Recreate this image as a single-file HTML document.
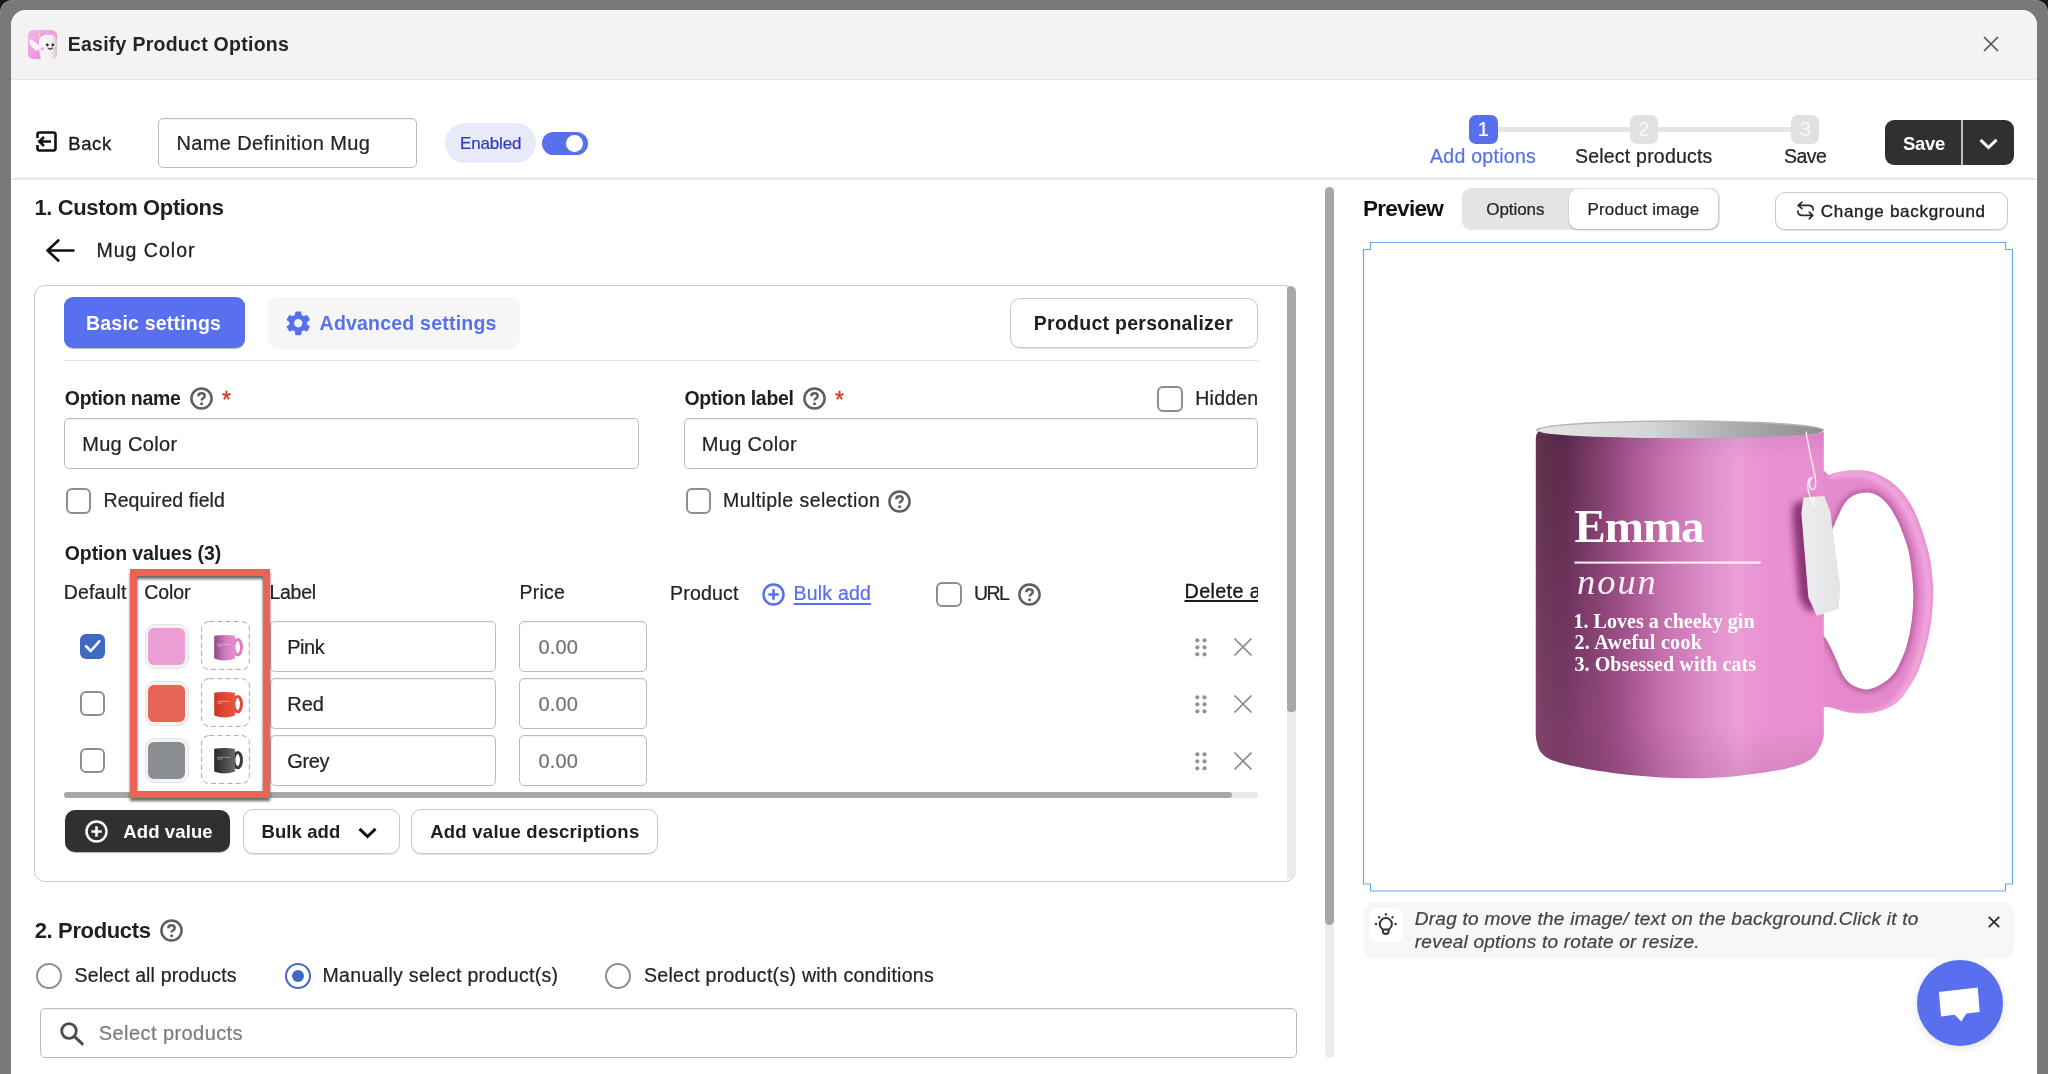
<!DOCTYPE html>
<html lang="en">
<head>
<meta charset="utf-8">
<title>Easify Product Options</title>
<style>
*{box-sizing:border-box;margin:0;padding:0}
html,body{width:2048px;height:1074px;overflow:hidden;background:#797979;font-family:"Liberation Sans",sans-serif;color:#303030}
.a{position:absolute}
.t{position:absolute;white-space:nowrap;line-height:1}
.inp{position:absolute;border:1.400px solid #b9bdc2;border-radius:5px;background:#fff;box-shadow:inset 0 1px 0 rgba(0,0,0,.05)}
.cb{position:absolute;width:25.500px;height:25.500px;border:2.500px solid #8a8f94;border-radius:6px;background:#fff}
.btn{position:absolute;border:1px solid #c6c9cc;border-radius:9px;background:#fff;box-shadow:0 1px 0 rgba(0,0,0,.10)}
.rad{position:absolute;width:26px;height:26px;border:2.500px solid #8a8f94;border-radius:50%;background:#fff}
svg{position:absolute;overflow:visible}
</style>
</head>
<body>
<div class="a" style="left:0;top:0;width:2048px;height:1074px;overflow:hidden;will-change:transform">
<!-- window corner -->
<div class="a" style="left:0;top:0;width:14px;height:14px;background:#161616"></div>
<div class="a" style="left:0;top:0;width:14px;height:14px;border-radius:12px 0 0 0;background:#797979;box-shadow:inset 1px 1px 0 rgba(255,255,255,.08)"></div>
<div class="a" style="left:2034px;top:0;width:14px;height:14px;background:#161616"></div>
<div class="a" style="left:2034px;top:0;width:14px;height:14px;border-radius:0 12px 0 0;background:#797979;box-shadow:inset -1px 1px 0 rgba(255,255,255,.08)"></div>
<!-- modal -->
<div class="a" style="left:11px;top:10px;width:2025.500px;height:1100px;background:#fff;border-radius:15px 15px 0 0"></div>
<!-- HEADER -->
<div class="a" style="left:11px;top:10px;width:2025.500px;height:69.800px;background:#f3f3f3;border-bottom:1.600px solid #e5e5e5;border-radius:15px 15px 0 0"></div>

<svg style="left:28px;top:30px" width="29" height="29" viewBox="0 0 29 29">
<defs><linearGradient id="lg" x1="0" y1="0" x2="1" y2="1"><stop offset="0" stop-color="#f5b5e7"/><stop offset="1" stop-color="#ea83d8"/></linearGradient>
<linearGradient id="lb" x1="0" x2="1"><stop offset="0" stop-color="#fbf8fa"/><stop offset=".7" stop-color="#f1edf0"/><stop offset="1" stop-color="#cfc9ce"/></linearGradient>
<clipPath id="lc"><rect width="29" height="29" rx="5.500"/></clipPath></defs>
<g clip-path="url(#lc)"><rect width="29" height="29" fill="url(#lg)"/>
<path d="M1.500 12.500 C0.500 10 2.500 8.500 4.500 10 L10 14.500 L12.500 18.500 L8.500 21 C5 19 2.500 16 1.500 12.500 Z" fill="#f8f3f7"/>
<path d="M11 12 C11 6.500 14.500 4.800 20 4.800 C26 4.800 29 6.500 29 12 L29 29 L13 29 C11.500 25 11 17 11 12 Z" fill="url(#lb)"/>
<circle cx="19.300" cy="14.900" r="1.350" fill="#26222a"/><circle cx="24.800" cy="14.900" r="1.350" fill="#26222a"/>
<path d="M20 18 Q22 20.300 24.200 18" stroke="#26222a" stroke-width="1.100" fill="none" stroke-linecap="round"/>
<circle cx="14.200" cy="19" r="1.700" fill="#f6a9dc"/><circle cx="27.300" cy="18.600" r="1.300" fill="#f6a9dc"/>
<circle cx="11.200" cy="5.400" r="1.300" fill="#f3d77a"/><circle cx="14" cy="4.700" r="1.100" fill="#8ea6f3"/>
</g></svg>
<div class="t" style="left:67.70px;top:34.99px;font:700 19.50px/1 'Liberation Sans',sans-serif;color:#242424;letter-spacing:0.263px;">Easify Product Options</div>
<svg style="left:1983px;top:36px" width="16" height="16" viewBox="0 0 16 16"><path d="M1 1 L15 15 M15 1 L1 15" stroke="#555" stroke-width="1.700" fill="none"/></svg>
<div class="a" style="left:12px;top:178px;width:2024px;height:1px;background:#dcdcdc;box-shadow:0 1px 2px rgba(0,0,0,.10)"></div>
<svg style="left:36px;top:131px" width="22" height="22" viewBox="0 0 22 22"><path d="M1.500 7 V3.500 Q1.500 1.500 3.500 1.500 H17.500 Q19.500 1.500 19.500 3.500 V17.500 Q19.500 19.500 17.500 19.500 H3.500 Q1.500 19.500 1.500 17.500 V14" stroke="#111" stroke-width="2.600" fill="none"/><path d="M15 10.500 H3.500 M8 6 L3.300 10.500 L8 15" stroke="#111" stroke-width="2.600" fill="none" stroke-linejoin="miter"/></svg>
<div class="t" style="left:68.20px;top:135.04px;font:400 18.50px/1 'Liberation Sans',sans-serif;color:#1a1a1a;letter-spacing:0.641px;-webkit-text-stroke:0.35px #1a1a1a;">Back</div>
<div class="inp" style="left:158px;top:117.600px;width:258.500px;height:50.600px;border-radius:5px"></div>
<div class="t" style="left:176.50px;top:133.47px;font:400 20.00px/1 'Liberation Sans',sans-serif;color:#242424;letter-spacing:0.365px;-webkit-text-stroke:0.22px #242424;">Name Definition Mug</div>
<div class="a" style="left:445px;top:123px;width:91px;height:39.500px;border-radius:20px;background:#e8eafa"></div>
<div class="t" style="left:460.00px;top:135.01px;font:400 17.00px/1 'Liberation Sans',sans-serif;color:#2c3db8;letter-spacing:-0.156px;-webkit-text-stroke:0.20px #2c3db8;">Enabled</div>
<div class="a" style="left:541.500px;top:131.500px;width:46px;height:23px;border-radius:12px;background:#5870ee"></div>
<div class="a" style="left:566px;top:134.500px;width:17px;height:17px;border-radius:50%;background:#fff"></div>
<div class="a" style="left:1490px;top:127px;width:310px;height:5px;background:#e4e5e7"></div>
<div class="a" style="left:1469px;top:115px;width:28.500px;height:28.500px;border-radius:7px;background:#5870ee"></div>
<div class="a" style="left:1630px;top:115px;width:28px;height:28.500px;border-radius:7px;background:#e1e1e1"></div>
<div class="a" style="left:1791px;top:115px;width:28px;height:28.500px;border-radius:7px;background:#e1e1e1"></div>
<div class="t" style="left:1477.70px;top:119.27px;font:400 20.00px/1 'Liberation Sans',sans-serif;color:#fff;letter-spacing:0.000px;-webkit-text-stroke:0.22px #fff;">1</div>
<div class="t" style="left:1638.30px;top:119.27px;font:400 20.00px/1 'Liberation Sans',sans-serif;color:#f6f6f6;letter-spacing:0.000px;-webkit-text-stroke:0.22px #f6f6f6;">2</div>
<div class="t" style="left:1799.80px;top:119.27px;font:400 20.00px/1 'Liberation Sans',sans-serif;color:#f6f6f6;letter-spacing:0.000px;-webkit-text-stroke:0.22px #f6f6f6;">3</div>
<div class="t" style="left:1430.00px;top:147.19px;font:400 19.50px/1 'Liberation Sans',sans-serif;color:#5870ee;letter-spacing:0.276px;-webkit-text-stroke:0.22px #5870ee;">Add options</div>
<div class="t" style="left:1575.00px;top:147.19px;font:400 19.50px/1 'Liberation Sans',sans-serif;color:#242424;letter-spacing:0.210px;-webkit-text-stroke:0.22px #242424;">Select products</div>
<div class="t" style="left:1784.00px;top:147.19px;font:400 19.50px/1 'Liberation Sans',sans-serif;color:#242424;letter-spacing:-0.534px;-webkit-text-stroke:0.22px #242424;">Save</div>
<div class="a" style="left:1885px;top:120px;width:129px;height:45px;border-radius:9px;background:#303030"></div>
<div class="a" style="left:1961px;top:120px;width:2px;height:45px;background:#bdbdbd"></div>
<div class="t" style="left:1903.00px;top:135.04px;font:700 18.50px/1 'Liberation Sans',sans-serif;color:#fff;letter-spacing:-0.306px;">Save</div>
<svg style="left:1979px;top:138px" width="19" height="12" viewBox="0 0 19 12"><path d="M1.500 1.800 L9.500 9.500 L17.500 1.800" stroke="#fff" stroke-width="3" fill="none"/></svg>
<div class="t" style="left:34.40px;top:197.28px;font:700 22.00px/1 'Liberation Sans',sans-serif;color:#1f1f1f;letter-spacing:-0.377px;">1. Custom Options</div>
<svg style="left:45px;top:239px" width="30" height="24" viewBox="0 0 30 24"><path d="M28.500 11.500 H2.500 M13.300 1.500 L2.500 11.500 L13.300 21.500" stroke="#111" stroke-width="2.600" fill="none" stroke-linecap="round" stroke-linejoin="round"/></svg>
<div class="t" style="left:96.40px;top:241.29px;font:400 19.50px/1 'Liberation Sans',sans-serif;color:#1f1f1f;letter-spacing:1.018px;-webkit-text-stroke:0.30px #1f1f1f;">Mug Color</div>
<div class="a" style="left:34.200px;top:285px;width:1262.300px;height:596.500px;border:1px solid #c9c9c9;border-radius:11px;background:#fff"></div>
<div class="a" style="left:1286.500px;top:287px;width:9px;height:592px;background:#ebebeb;border-radius:0 9px 9px 0"></div>
<div class="a" style="left:1286.500px;top:286px;width:9px;height:426px;background:#a8a8a8;border-radius:5px 8px 5px 5px"></div>
<div class="a" style="left:64px;top:297px;width:180.500px;height:51px;border-radius:9px;background:#5870ee;box-shadow:0 1px 0 rgba(0,0,0,.25)"></div>
<div class="t" style="left:86.00px;top:314.09px;font:700 19.50px/1 'Liberation Sans',sans-serif;color:#fff;letter-spacing:0.202px;">Basic settings</div>
<div class="a" style="left:267.500px;top:297px;width:252px;height:52px;border-radius:11px;background:#f6f6f6"></div>
<svg style="left:284.200px;top:308.600px" width="28.500" height="28.500" viewBox="0 0 24 24"><path fill="#5870ee" fill-rule="evenodd" d="M19.430 12.980c.040-.320.070-.640.070-.980s-.030-.660-.070-.980l2.110-1.650c.190-.150.240-.420.120-.640l-2-3.460c-.120-.220-.390-.300-.610-.220l-2.490 1c-.520-.400-1.080-.730-1.690-.980l-.380-2.650A.488.488 0 0 0 14 2h-4c-.250 0-.460.180-.490.420l-.380 2.650c-.610.250-1.170.590-1.690.980l-2.490-1c-.230-.090-.490 0-.610.220l-2 3.460c-.130.220-.070.490.120.640l2.110 1.650c-.040.320-.070.650-.070.980s.030.660.070.980l-2.110 1.650c-.190.150-.240.420-.120.640l2 3.460c.120.220.390.300.610.220l2.490-1c.520.400 1.080.730 1.690.980l.380 2.650c.030.240.240.420.490.420h4c.250 0 .460-.180.490-.420l.380-2.650c.610-.250 1.170-.590 1.690-.980l2.490 1c.230.090.490 0 .610-.220l2-3.460c.120-.220.070-.490-.120-.640l-2.110-1.650zM12 15.500c-1.930 0-3.500-1.570-3.500-3.500s1.570-3.500 3.500-3.500 3.500 1.570 3.500 3.500-1.570 3.500-3.500 3.500z"/></svg>
<div class="t" style="left:319.60px;top:313.99px;font:700 19.50px/1 'Liberation Sans',sans-serif;color:#5870ee;letter-spacing:0.211px;">Advanced settings</div>
<div class="btn" style="left:1010px;top:297.500px;width:247.500px;height:50.500px;border-radius:10px"></div>
<div class="t" style="left:1033.80px;top:313.69px;font:700 19.50px/1 'Liberation Sans',sans-serif;color:#202020;letter-spacing:0.265px;">Product personalizer</div>
<div class="a" style="left:64px;top:360px;width:1193.500px;height:1px;background:#dfdfdf"></div>
<div class="t" style="left:64.80px;top:389.39px;font:700 19.50px/1 'Liberation Sans',sans-serif;color:#1f1f1f;letter-spacing:-0.313px;">Option name</div>
<svg style="left:189.7px;top:387.0px" width="23" height="23" viewBox="0 0 23 23"><circle cx="11.500" cy="11.500" r="10.100" stroke="#5c5f62" stroke-width="2.500" fill="none"/><path d="M8.300 9.300 Q8.300 6.300 11.500 6.300 Q14.700 6.300 14.700 9 Q14.700 10.700 12.800 11.600 Q11.600 12.200 11.600 13.600" stroke="#5c5f62" stroke-width="2.500" fill="none"/><circle cx="11.600" cy="16.800" r="1.550" fill="#5c5f62"/></svg>
<div class="t" style="left:221.90px;top:389.23px;font:400 23.00px/1 'Liberation Sans',sans-serif;color:#cf3a1f;letter-spacing:0.000px;-webkit-text-stroke:0.30px #cf3a1f;">*</div>
<div class="t" style="left:684.40px;top:389.39px;font:700 19.50px/1 'Liberation Sans',sans-serif;color:#1f1f1f;letter-spacing:-0.277px;">Option label</div>
<svg style="left:803.0px;top:387.0px" width="23" height="23" viewBox="0 0 23 23"><circle cx="11.500" cy="11.500" r="10.100" stroke="#5c5f62" stroke-width="2.500" fill="none"/><path d="M8.300 9.300 Q8.300 6.300 11.500 6.300 Q14.700 6.300 14.700 9 Q14.700 10.700 12.800 11.600 Q11.600 12.200 11.600 13.600" stroke="#5c5f62" stroke-width="2.500" fill="none"/><circle cx="11.600" cy="16.800" r="1.550" fill="#5c5f62"/></svg>
<div class="t" style="left:835.00px;top:389.23px;font:400 23.00px/1 'Liberation Sans',sans-serif;color:#cf3a1f;letter-spacing:0.000px;-webkit-text-stroke:0.30px #cf3a1f;">*</div>
<div class="cb" style="left:1157px;top:386px"></div>
<div class="t" style="left:1195.30px;top:389.29px;font:400 19.50px/1 'Liberation Sans',sans-serif;color:#242424;letter-spacing:0.210px;-webkit-text-stroke:0.22px #242424;">Hidden</div>
<div class="inp" style="left:64px;top:418.200px;width:574.500px;height:50.800px"></div>
<div class="t" style="left:82.20px;top:434.47px;font:400 20.00px/1 'Liberation Sans',sans-serif;color:#242424;letter-spacing:0.326px;-webkit-text-stroke:0.22px #242424;">Mug Color</div>
<div class="inp" style="left:684px;top:418.200px;width:573.500px;height:50.800px"></div>
<div class="t" style="left:701.70px;top:434.47px;font:400 20.00px/1 'Liberation Sans',sans-serif;color:#242424;letter-spacing:0.338px;-webkit-text-stroke:0.22px #242424;">Mug Color</div>
<div class="cb" style="left:65.500px;top:488px"></div>
<div class="t" style="left:103.50px;top:491.39px;font:400 19.50px/1 'Liberation Sans',sans-serif;color:#242424;letter-spacing:0.079px;-webkit-text-stroke:0.22px #242424;">Required field</div>
<div class="cb" style="left:685.500px;top:488px"></div>
<div class="t" style="left:723.00px;top:491.39px;font:400 19.50px/1 'Liberation Sans',sans-serif;color:#242424;letter-spacing:0.428px;-webkit-text-stroke:0.22px #242424;">Multiple selection</div>
<svg style="left:888.0px;top:490.0px" width="23" height="23" viewBox="0 0 23 23"><circle cx="11.500" cy="11.500" r="10.100" stroke="#5c5f62" stroke-width="2.500" fill="none"/><path d="M8.300 9.300 Q8.300 6.300 11.500 6.300 Q14.700 6.300 14.700 9 Q14.700 10.700 12.800 11.600 Q11.600 12.200 11.600 13.600" stroke="#5c5f62" stroke-width="2.500" fill="none"/><circle cx="11.600" cy="16.800" r="1.550" fill="#5c5f62"/></svg>
<div class="t" style="left:64.80px;top:543.69px;font:700 19.50px/1 'Liberation Sans',sans-serif;color:#1f1f1f;letter-spacing:-0.112px;">Option values (3)</div>
<div class="t" style="left:63.80px;top:583.09px;font:400 19.50px/1 'Liberation Sans',sans-serif;color:#242424;letter-spacing:0.139px;-webkit-text-stroke:0.22px #242424;">Default</div>
<div class="t" style="left:144.30px;top:583.09px;font:400 19.50px/1 'Liberation Sans',sans-serif;color:#242424;letter-spacing:-0.126px;-webkit-text-stroke:0.22px #242424;">Color</div>
<div class="t" style="left:269.50px;top:583.09px;font:400 19.50px/1 'Liberation Sans',sans-serif;color:#242424;letter-spacing:-0.295px;-webkit-text-stroke:0.22px #242424;">Label</div>
<div class="t" style="left:519.50px;top:583.09px;font:400 19.50px/1 'Liberation Sans',sans-serif;color:#242424;letter-spacing:0.229px;-webkit-text-stroke:0.22px #242424;">Price</div>
<div class="t" style="left:670.00px;top:584.09px;font:400 19.50px/1 'Liberation Sans',sans-serif;color:#242424;letter-spacing:0.203px;-webkit-text-stroke:0.22px #242424;">Product</div>
<svg style="left:762px;top:582.500px" width="23" height="23" viewBox="0 0 23 23"><circle cx="11.500" cy="11.500" r="10" stroke="#5870ee" stroke-width="2.500" fill="none"/><path d="M11.500 6.300 V16.700 M6.300 11.500 H16.700" stroke="#5870ee" stroke-width="2.600" fill="none"/></svg>
<div class="t" style="left:793.50px;top:584.49px;font:400 19.50px/1 'Liberation Sans',sans-serif;color:#5870ee;letter-spacing:0.208px;-webkit-text-stroke:0.22px #5870ee;text-decoration:underline;text-decoration-thickness:1.500px;text-underline-offset:2.500px;">Bulk add</div>
<div class="cb" style="left:936px;top:581.500px"></div>
<div class="t" style="left:974.00px;top:584.09px;font:400 19.50px/1 'Liberation Sans',sans-serif;color:#242424;letter-spacing:-1.632px;-webkit-text-stroke:0.22px #242424;">URL</div>
<svg style="left:1018.0px;top:582.5px" width="23" height="23" viewBox="0 0 23 23"><circle cx="11.500" cy="11.500" r="10.100" stroke="#5c5f62" stroke-width="2.500" fill="none"/><path d="M8.300 9.300 Q8.300 6.300 11.500 6.300 Q14.700 6.300 14.700 9 Q14.700 10.700 12.800 11.600 Q11.600 12.200 11.600 13.600" stroke="#5c5f62" stroke-width="2.500" fill="none"/><circle cx="11.600" cy="16.800" r="1.550" fill="#5c5f62"/></svg>
<div class="a" style="left:1180px;top:575px;width:78px;height:40px;overflow:hidden">
<div class="t" style="left:4.50px;top:6.84px;font:400 19.80px/1 'Liberation Sans',sans-serif;color:#1a1a1a;letter-spacing:0.000px;-webkit-text-stroke:0.35px #1a1a1a;text-decoration:underline;text-decoration-thickness:2px;text-underline-offset:2px;letter-spacing:0.350px;">Delete all</div>
</div>
<div class="a" style="left:79.500px;top:633.9px;width:25.500px;height:25.500px;border-radius:6px;background:#3f6ac4"></div>
<svg style="left:79.500px;top:633.9px" width="26" height="26" viewBox="0 0 26 26"><path d="M6 12.200 L10.700 17 L19.300 7.300" stroke="#fff" stroke-width="2.600" fill="none" stroke-linecap="round" stroke-linejoin="round"/></svg>
<div class="a" style="left:144.500px;top:624.4px;width:44px;height:44.500px;border-radius:10px;border:1px solid #e2e3e3;background:#f3f4f4"></div>
<div class="a" style="left:148px;top:628.4px;width:37px;height:37px;border-radius:6px;background:#ec9fd4"></div>
<svg style="left:201px;top:621.4px" width="49" height="49" viewBox="0 0 49 49"><rect x=".600" y=".600" width="47.800" height="47.800" rx="7.500" fill="#fff" stroke="#a6abb1" stroke-width="1" stroke-dasharray="5.200 3"/></svg>
<div class="inp" style="left:269.500px;top:621.4px;width:226.500px;height:50.500px"></div>
<div class="t" style="left:287.20px;top:637.17px;font:400 20.00px/1 'Liberation Sans',sans-serif;color:#242424;letter-spacing:-0.435px;-webkit-text-stroke:0.22px #242424;">Pink</div>
<div class="inp" style="left:519px;top:621.4px;width:128px;height:50.500px"></div>
<div class="t" style="left:538.40px;top:637.37px;font:400 20.00px/1 'Liberation Sans',sans-serif;color:#6f7377;letter-spacing:0.166px;-webkit-text-stroke:0.22px #6f7377;">0.00</div>
<svg style="left:1194.500px;top:637.7px" width="12" height="19" viewBox="0 0 12 19" fill="#8f9398"><circle cx="2.3" cy="2.3" r="2.100"/><circle cx="2.3" cy="9.3" r="2.100"/><circle cx="2.3" cy="16.3" r="2.100"/><circle cx="9.5" cy="2.3" r="2.100"/><circle cx="9.5" cy="9.3" r="2.100"/><circle cx="9.5" cy="16.3" r="2.100"/></svg>
<svg style="left:1234px;top:637.7px" width="18" height="18" viewBox="0 0 18 18"><path d="M0.500 0.500 L17.500 17.500 M17.500 0.500 L0.500 17.500" stroke="#85888c" stroke-width="1.700" fill="none"/></svg>
<div class="cb" style="left:79.500px;top:690.6px"></div>
<div class="a" style="left:144.500px;top:681.3px;width:44px;height:44.500px;border-radius:10px;border:1px solid #e2e3e3;background:#f3f4f4"></div>
<div class="a" style="left:148px;top:685.3px;width:37px;height:37px;border-radius:6px;background:#e66557"></div>
<svg style="left:201px;top:678.3px" width="49" height="49" viewBox="0 0 49 49"><rect x=".600" y=".600" width="47.800" height="47.800" rx="7.500" fill="#fff" stroke="#a6abb1" stroke-width="1" stroke-dasharray="5.200 3"/></svg>
<div class="inp" style="left:269.500px;top:678.3px;width:226.500px;height:50.500px"></div>
<div class="t" style="left:287.20px;top:694.07px;font:400 20.00px/1 'Liberation Sans',sans-serif;color:#242424;letter-spacing:0.000px;-webkit-text-stroke:0.22px #242424;">Red</div>
<div class="inp" style="left:519px;top:678.3px;width:128px;height:50.500px"></div>
<div class="t" style="left:538.40px;top:694.27px;font:400 20.00px/1 'Liberation Sans',sans-serif;color:#6f7377;letter-spacing:0.166px;-webkit-text-stroke:0.22px #6f7377;">0.00</div>
<svg style="left:1194.500px;top:694.6px" width="12" height="19" viewBox="0 0 12 19" fill="#8f9398"><circle cx="2.3" cy="2.3" r="2.100"/><circle cx="2.3" cy="9.3" r="2.100"/><circle cx="2.3" cy="16.3" r="2.100"/><circle cx="9.5" cy="2.3" r="2.100"/><circle cx="9.5" cy="9.3" r="2.100"/><circle cx="9.5" cy="16.3" r="2.100"/></svg>
<svg style="left:1234px;top:694.6px" width="18" height="18" viewBox="0 0 18 18"><path d="M0.500 0.500 L17.500 17.500 M17.500 0.500 L0.500 17.500" stroke="#85888c" stroke-width="1.700" fill="none"/></svg>
<div class="cb" style="left:79.500px;top:747.5px"></div>
<div class="a" style="left:144.500px;top:738.2px;width:44px;height:44.500px;border-radius:10px;border:1px solid #e2e3e3;background:#f3f4f4"></div>
<div class="a" style="left:148px;top:742.2px;width:37px;height:37px;border-radius:6px;background:#8a8d91"></div>
<svg style="left:201px;top:735.2px" width="49" height="49" viewBox="0 0 49 49"><rect x=".600" y=".600" width="47.800" height="47.800" rx="7.500" fill="#fff" stroke="#a6abb1" stroke-width="1" stroke-dasharray="5.200 3"/></svg>
<div class="inp" style="left:269.500px;top:735.2px;width:226.500px;height:50.500px"></div>
<div class="t" style="left:287.20px;top:750.97px;font:400 20.00px/1 'Liberation Sans',sans-serif;color:#242424;letter-spacing:-0.313px;-webkit-text-stroke:0.22px #242424;">Grey</div>
<div class="inp" style="left:519px;top:735.2px;width:128px;height:50.500px"></div>
<div class="t" style="left:538.40px;top:751.17px;font:400 20.00px/1 'Liberation Sans',sans-serif;color:#6f7377;letter-spacing:0.166px;-webkit-text-stroke:0.22px #6f7377;">0.00</div>
<svg style="left:1194.500px;top:751.5px" width="12" height="19" viewBox="0 0 12 19" fill="#8f9398"><circle cx="2.3" cy="2.3" r="2.100"/><circle cx="2.3" cy="9.3" r="2.100"/><circle cx="2.3" cy="16.3" r="2.100"/><circle cx="9.5" cy="2.3" r="2.100"/><circle cx="9.5" cy="9.3" r="2.100"/><circle cx="9.5" cy="16.3" r="2.100"/></svg>
<svg style="left:1234px;top:751.5px" width="18" height="18" viewBox="0 0 18 18"><path d="M0.500 0.500 L17.500 17.500 M17.500 0.500 L0.500 17.500" stroke="#85888c" stroke-width="1.700" fill="none"/></svg>
<svg style="left:210px;top:632.6px" width="36" height="30" viewBox="210 632.6 36 30"><defs><linearGradient id="tg632" x1="0" x2="1"><stop offset="0" stop-color="#8f4780"/><stop offset=".55" stop-color="#d47dc1"/><stop offset="1" stop-color="#e48ecf"/></linearGradient></defs><g transform="translate(0 -0.9)"><ellipse cx="237.700" cy="647.600" rx="3.800" ry="7.600" stroke="#e07cc6" stroke-width="3" fill="none"/><path d="M214.200 636.200 Q224.500 634.600 234.900 636.200 L234.900 659 Q224.500 662.800 214.200 659 Z" fill="url(#tg632)"/><path d="M217 644.800 H230 M217 646.600 H222" stroke="rgba(255,255,255,.6)" stroke-width=".7"/></g></svg>
<svg style="left:210px;top:689.5px" width="36" height="30" viewBox="210 689.5 36 30"><defs><linearGradient id="tg689" x1="0" x2="1"><stop offset="0" stop-color="#c43626"/><stop offset=".55" stop-color="#e14a38"/><stop offset="1" stop-color="#e8543f"/></linearGradient></defs><g transform="translate(0 56.0)"><ellipse cx="237.700" cy="647.600" rx="3.800" ry="7.600" stroke="#e04a3b" stroke-width="3" fill="none"/><path d="M214.200 636.200 Q224.500 634.600 234.900 636.200 L234.900 659 Q224.500 662.800 214.200 659 Z" fill="url(#tg689)"/><path d="M217 644.800 H230 M217 646.600 H222" stroke="rgba(255,255,255,.6)" stroke-width=".7"/></g></svg>
<svg style="left:210px;top:746.4px" width="36" height="30" viewBox="210 746.4 36 30"><defs><linearGradient id="tg746" x1="0" x2="1"><stop offset="0" stop-color="#29292b"/><stop offset=".55" stop-color="#4a4a4c"/><stop offset="1" stop-color="#69696b"/></linearGradient></defs><g transform="translate(0 112.9)"><ellipse cx="237.700" cy="647.600" rx="3.800" ry="7.600" stroke="#3c3c3e" stroke-width="3" fill="none"/><path d="M214.200 636.200 Q224.500 634.600 234.900 636.200 L234.900 659 Q224.500 662.800 214.200 659 Z" fill="url(#tg746)"/><path d="M217 644.800 H230 M217 646.600 H222" stroke="rgba(255,255,255,.6)" stroke-width=".7"/></g></svg>
<div class="a" style="left:64px;top:791.500px;width:1194px;height:6px;border-radius:3px;background:#e9e9e9"></div>
<div class="a" style="left:64px;top:791.500px;width:1168px;height:6px;border-radius:3px;background:#a8a8a8"></div>
<div class="a" style="left:130px;top:569px;width:140px;height:229px;border:7px solid #ea6357;filter:drop-shadow(0 3.300px 1.400px rgba(0,0,0,.6))"></div>
<div class="a" style="left:64.800px;top:809.800px;width:165.300px;height:42.400px;border-radius:10px;background:#303030;box-shadow:0 1px 1px rgba(0,0,0,.3)"></div>
<svg style="left:85px;top:820px" width="23" height="23" viewBox="0 0 23 23"><circle cx="11.500" cy="11.500" r="10" stroke="#fff" stroke-width="2.500" fill="none"/><path d="M11.500 6.300 V16.700 M6.300 11.500 H16.700" stroke="#fff" stroke-width="2.600" fill="none"/></svg>
<div class="t" style="left:123.30px;top:823.44px;font:700 18.50px/1 'Liberation Sans',sans-serif;color:#fff;letter-spacing:0.110px;">Add value</div>
<div class="btn" style="left:242.500px;top:809px;width:157px;height:44.500px;border-radius:10px"></div>
<div class="t" style="left:261.50px;top:823.44px;font:700 18.50px/1 'Liberation Sans',sans-serif;color:#202020;letter-spacing:0.097px;">Bulk add</div>
<svg style="left:357.500px;top:826.500px" width="19" height="12" viewBox="0 0 19 12"><path d="M1.500 1.800 L9.500 9.500 L17.500 1.800" stroke="#111" stroke-width="3" fill="none"/></svg>
<div class="btn" style="left:411px;top:809px;width:246.500px;height:44.500px;border-radius:10px"></div>
<div class="t" style="left:430.20px;top:823.44px;font:700 18.50px/1 'Liberation Sans',sans-serif;color:#202020;letter-spacing:0.259px;">Add value descriptions</div>
<div class="t" style="left:34.70px;top:919.78px;font:700 22.00px/1 'Liberation Sans',sans-serif;color:#1f1f1f;letter-spacing:-0.357px;">2. Products</div>
<svg style="left:160.0px;top:919.0px" width="23" height="23" viewBox="0 0 23 23"><circle cx="11.500" cy="11.500" r="10.100" stroke="#5c5f62" stroke-width="2.500" fill="none"/><path d="M8.300 9.300 Q8.300 6.300 11.500 6.300 Q14.700 6.300 14.700 9 Q14.700 10.700 12.800 11.600 Q11.600 12.200 11.600 13.600" stroke="#5c5f62" stroke-width="2.500" fill="none"/><circle cx="11.600" cy="16.800" r="1.550" fill="#5c5f62"/></svg>
<div class="rad" style="left:35.500px;top:963px"></div>
<div class="t" style="left:74.50px;top:965.59px;font:400 19.50px/1 'Liberation Sans',sans-serif;color:#242424;letter-spacing:0.145px;-webkit-text-stroke:0.22px #242424;">Select all products</div>
<div class="rad" style="left:284.500px;top:963px;border-color:#3f6ac4;border-width:2.500px"></div>
<div class="a" style="left:291.500px;top:970px;width:12px;height:12px;border-radius:50%;background:#3f6ac4"></div>
<div class="t" style="left:322.50px;top:965.59px;font:400 19.50px/1 'Liberation Sans',sans-serif;color:#242424;letter-spacing:0.320px;-webkit-text-stroke:0.22px #242424;">Manually select product(s)</div>
<div class="rad" style="left:605px;top:963px"></div>
<div class="t" style="left:644.00px;top:965.59px;font:400 19.50px/1 'Liberation Sans',sans-serif;color:#242424;letter-spacing:0.282px;-webkit-text-stroke:0.22px #242424;">Select product(s) with conditions</div>
<div class="inp" style="left:40px;top:1007.500px;width:1256.500px;height:50.500px"></div>
<svg style="left:59.500px;top:1021.500px" width="24" height="23" viewBox="0 0 24 23"><circle cx="9" cy="9" r="7.300" stroke="#4a4d50" stroke-width="2.800" fill="none"/><path d="M14.300 14.300 L22.300 21.800" stroke="#4a4d50" stroke-width="3" stroke-linecap="round"/></svg>
<div class="t" style="left:98.80px;top:1022.97px;font:400 20.00px/1 'Liberation Sans',sans-serif;color:#7a7d80;letter-spacing:0.425px;-webkit-text-stroke:0.22px #7a7d80;">Select products</div>
<div class="a" style="left:1325px;top:187px;width:8.500px;height:871px;border-radius:5px;background:#ececec"></div>
<div class="a" style="left:1325px;top:187px;width:8.500px;height:738px;border-radius:5px;background:#a6a6a6"></div>
<div class="t" style="left:1363.00px;top:197.57px;font:700 22.60px/1 'Liberation Sans',sans-serif;color:#111;letter-spacing:-0.773px;">Preview</div>
<div class="a" style="left:1462px;top:188px;width:257.500px;height:42px;border-radius:9px;background:#e4e4e4"></div>
<div class="a" style="left:1569px;top:189px;width:148.800px;height:40px;border-radius:9px;background:#fff;box-shadow:0 1px 2px rgba(0,0,0,.25)"></div>
<div class="t" style="left:1486.30px;top:200.91px;font:400 17.00px/1 'Liberation Sans',sans-serif;color:#242424;letter-spacing:-0.064px;-webkit-text-stroke:0.22px #242424;">Options</div>
<div class="t" style="left:1587.50px;top:200.91px;font:400 17.00px/1 'Liberation Sans',sans-serif;color:#242424;letter-spacing:0.170px;-webkit-text-stroke:0.22px #242424;">Product image</div>
<div class="btn" style="left:1774.500px;top:191.500px;width:233px;height:38.500px;border-radius:10px"></div>
<svg style="left:1797px;top:202px" width="17" height="17" viewBox="0 0 17 17"><path d="M5 0.200 L1.100 3.400 L5 6.600 M1.100 3.400 H11.500 Q16.200 3.400 16.200 8 M0.800 9 Q0.800 13.400 5.500 13.400 H15.700 M12.300 10.200 L15.700 13.400 L12.300 16.800" stroke="#2a2a2a" stroke-width="1.700" fill="none" stroke-linecap="round" stroke-linejoin="round"/></svg>
<div class="t" style="left:1820.80px;top:203.21px;font:400 17.00px/1 'Liberation Sans',sans-serif;color:#202020;letter-spacing:0.696px;-webkit-text-stroke:0.35px #202020;">Change background</div>
<svg style="left:0;top:0" width="2048" height="1074" viewBox="0 0 2048 1074">
<path d="M1370.500 242.500 H2005.500 V249.500 H2012.500 V884 H2005.500 V891 H1370.500 V884 H1363.500 V249.500 H1370.500 Z" fill="#fff" stroke="#66a8f3" stroke-width="1.200"/>
<defs>
<linearGradient id="mb" x1="1535" x2="1825" y1="0" y2="0" gradientUnits="userSpaceOnUse">
<stop offset="0" stop-color="#663851"/><stop offset=".03" stop-color="#60324c"/><stop offset=".08" stop-color="#5d2b4c"/><stop offset=".11" stop-color="#612d50"/><stop offset=".14" stop-color="#6a3259"/><stop offset=".18" stop-color="#773964"/><stop offset=".22" stop-color="#84406f"/><stop offset=".32" stop-color="#a4558e"/><stop offset=".45" stop-color="#c672b0"/><stop offset=".58" stop-color="#dc8cc8"/><stop offset=".70" stop-color="#ea9fd6"/><stop offset=".78" stop-color="#ea92d3"/><stop offset=".92" stop-color="#ea90d2"/><stop offset="1" stop-color="#e68ccf"/>
</linearGradient>
<linearGradient id="mi" x1="1535" x2="1825" y1="0" y2="0" gradientUnits="userSpaceOnUse">
<stop offset="0" stop-color="#e4e6e6"/><stop offset=".4" stop-color="#d3d6d6"/><stop offset=".7" stop-color="#a9acad"/><stop offset="1" stop-color="#8b8e8f"/>
</linearGradient>
<linearGradient id="mbv" x1="0" x2="0" y1="432" y2="778" gradientUnits="userSpaceOnUse">
<stop offset="0" stop-color="#000" stop-opacity=".06"/><stop offset=".08" stop-color="#000" stop-opacity="0"/><stop offset=".85" stop-color="#000" stop-opacity="0"/><stop offset="1" stop-color="#401030" stop-opacity=".10"/>
</linearGradient>
<linearGradient id="mh" x1="1824" x2="1934" y1="0" y2="0" gradientUnits="userSpaceOnUse">
<stop offset="0" stop-color="#e288c9"/><stop offset=".5" stop-color="#e78dcf"/><stop offset="1" stop-color="#ea93d3"/>
</linearGradient>
<linearGradient id="tg" x1="1800" x2="1842" y1="0" y2="0" gradientUnits="userSpaceOnUse">
<stop offset="0" stop-color="#eeeef1"/><stop offset="1" stop-color="#e3e3e7"/>
</linearGradient>
<linearGradient id="lv" x1="0" x2="0" y1="470" y2="778" gradientUnits="userSpaceOnUse"><stop offset="0" stop-color="#b65c9f" stop-opacity="0"/><stop offset="1" stop-color="#b65c9f" stop-opacity=".42"/></linearGradient><linearGradient id="lh" x1="1535" x2="1640" y1="0" y2="0" gradientUnits="userSpaceOnUse"><stop offset="0" stop-color="#fff"/><stop offset=".45" stop-color="#fff" stop-opacity=".8"/><stop offset="1" stop-color="#fff" stop-opacity="0"/></linearGradient><mask id="lm" maskUnits="userSpaceOnUse" x="1530" y="420" width="300" height="370"><rect x="1530" y="420" width="120" height="370" fill="url(#lh)"/></mask>
<filter id="bl2" x="-30%" y="-30%" width="160%" height="160%"><feGaussianBlur stdDeviation="2.200"/></filter><filter id="bl3" x="-50%" y="-30%" width="200%" height="160%"><feGaussianBlur stdDeviation="3.500"/></filter>
</defs>
<clipPath id="hcp"><path clip-rule="evenodd" d="M1816.0 469.0 C1817.4 469.3 1822.2 470.0 1824.3 471.0 C1826.4 472.0 1826.9 474.4 1828.6 474.8 C1830.3 475.2 1831.8 473.7 1834.4 473.1 C1837.0 472.5 1840.9 471.6 1844.2 471.1 C1847.5 470.6 1850.7 470.3 1854.0 470.2 C1857.3 470.1 1860.5 470.2 1863.8 470.6 C1867.0 471.0 1870.2 471.5 1873.5 472.6 C1876.8 473.7 1880.0 475.2 1883.3 477.0 C1886.6 478.8 1889.8 480.7 1893.1 483.4 C1896.4 486.1 1899.6 489.0 1902.9 493.1 C1906.2 497.2 1909.9 502.8 1912.7 507.8 C1915.5 512.9 1917.4 517.9 1919.5 523.4 C1921.6 528.9 1923.6 534.9 1925.4 541.0 C1927.2 547.1 1929.1 554.0 1930.2 560.0 C1931.3 566.0 1931.8 571.5 1932.3 577.0 C1932.8 582.5 1933.3 586.0 1933.2 593.1 C1933.1 600.2 1932.6 610.8 1931.4 619.6 C1930.2 628.5 1928.4 637.4 1926.1 646.2 C1923.8 655.1 1921.1 664.4 1917.3 672.7 C1913.5 681.0 1907.3 690.3 1903.1 695.8 C1898.9 701.3 1895.7 703.2 1892.2 705.6 C1888.7 708.0 1885.4 709.0 1882.0 710.2 C1878.6 711.4 1875.1 712.2 1871.7 712.7 C1868.3 713.2 1864.9 713.4 1861.5 713.4 C1858.1 713.4 1854.6 713.2 1851.2 712.7 C1847.8 712.2 1844.4 711.6 1841.0 710.7 C1837.6 709.9 1833.7 708.2 1830.7 707.6 C1827.7 707.0 1825.5 707.1 1823.0 707.1 C1820.5 707.1 1817.2 707.4 1816.0 707.5 Z M1816.0 562.0 C1817.7 559.2 1823.2 550.5 1826.0 545.0 C1828.8 539.5 1830.6 533.9 1832.5 529.3 C1834.4 524.7 1835.5 521.8 1837.4 517.6 C1839.4 513.4 1841.9 507.3 1844.2 503.9 C1846.5 500.5 1848.6 498.7 1851.1 497.0 C1853.5 495.3 1856.3 494.3 1858.9 493.6 C1861.5 492.9 1864.1 492.5 1866.7 492.6 C1869.3 492.7 1871.9 493.0 1874.5 494.1 C1877.1 495.2 1879.7 496.7 1882.3 499.0 C1884.9 501.3 1887.6 504.1 1890.2 507.8 C1892.8 511.6 1895.7 516.8 1898.0 521.5 C1900.3 526.2 1902.1 531.1 1903.9 536.1 C1905.7 541.1 1907.5 546.7 1908.7 551.8 C1909.9 556.9 1910.3 559.6 1911.1 566.5 C1911.9 573.4 1913.3 584.2 1913.4 593.1 C1913.5 602.0 1913.0 610.8 1911.9 619.6 C1910.8 628.5 1908.9 638.2 1906.6 646.2 C1904.2 654.2 1900.2 662.5 1897.8 667.4 C1895.4 672.2 1894.3 672.9 1892.2 675.3 C1890.1 677.7 1888.5 679.5 1885.4 681.6 C1882.3 683.7 1877.5 686.8 1873.8 688.1 C1870.1 689.4 1866.9 689.6 1863.5 689.2 C1860.1 688.8 1856.2 687.2 1853.3 685.6 C1850.4 684.0 1848.1 681.8 1846.1 679.4 C1844.0 677.0 1842.7 674.6 1841.0 671.2 C1839.3 667.8 1837.6 662.8 1835.9 658.9 C1834.2 655.0 1832.4 651.1 1830.7 647.7 C1829.0 644.3 1826.8 640.5 1825.5 638.5 C1824.2 636.5 1824.3 636.6 1822.7 635.4 C1821.1 634.1 1817.1 631.7 1816.0 631.0 Z"/></clipPath>
<path fill="#e48acc" fill-rule="evenodd" d="M1816.0 469.0 C1817.4 469.3 1822.2 470.0 1824.3 471.0 C1826.4 472.0 1826.9 474.4 1828.6 474.8 C1830.3 475.2 1831.8 473.7 1834.4 473.1 C1837.0 472.5 1840.9 471.6 1844.2 471.1 C1847.5 470.6 1850.7 470.3 1854.0 470.2 C1857.3 470.1 1860.5 470.2 1863.8 470.6 C1867.0 471.0 1870.2 471.5 1873.5 472.6 C1876.8 473.7 1880.0 475.2 1883.3 477.0 C1886.6 478.8 1889.8 480.7 1893.1 483.4 C1896.4 486.1 1899.6 489.0 1902.9 493.1 C1906.2 497.2 1909.9 502.8 1912.7 507.8 C1915.5 512.9 1917.4 517.9 1919.5 523.4 C1921.6 528.9 1923.6 534.9 1925.4 541.0 C1927.2 547.1 1929.1 554.0 1930.2 560.0 C1931.3 566.0 1931.8 571.5 1932.3 577.0 C1932.8 582.5 1933.3 586.0 1933.2 593.1 C1933.1 600.2 1932.6 610.8 1931.4 619.6 C1930.2 628.5 1928.4 637.4 1926.1 646.2 C1923.8 655.1 1921.1 664.4 1917.3 672.7 C1913.5 681.0 1907.3 690.3 1903.1 695.8 C1898.9 701.3 1895.7 703.2 1892.2 705.6 C1888.7 708.0 1885.4 709.0 1882.0 710.2 C1878.6 711.4 1875.1 712.2 1871.7 712.7 C1868.3 713.2 1864.9 713.4 1861.5 713.4 C1858.1 713.4 1854.6 713.2 1851.2 712.7 C1847.8 712.2 1844.4 711.6 1841.0 710.7 C1837.6 709.9 1833.7 708.2 1830.7 707.6 C1827.7 707.0 1825.5 707.1 1823.0 707.1 C1820.5 707.1 1817.2 707.4 1816.0 707.5 Z M1816.0 562.0 C1817.7 559.2 1823.2 550.5 1826.0 545.0 C1828.8 539.5 1830.6 533.9 1832.5 529.3 C1834.4 524.7 1835.5 521.8 1837.4 517.6 C1839.4 513.4 1841.9 507.3 1844.2 503.9 C1846.5 500.5 1848.6 498.7 1851.1 497.0 C1853.5 495.3 1856.3 494.3 1858.9 493.6 C1861.5 492.9 1864.1 492.5 1866.7 492.6 C1869.3 492.7 1871.9 493.0 1874.5 494.1 C1877.1 495.2 1879.7 496.7 1882.3 499.0 C1884.9 501.3 1887.6 504.1 1890.2 507.8 C1892.8 511.6 1895.7 516.8 1898.0 521.5 C1900.3 526.2 1902.1 531.1 1903.9 536.1 C1905.7 541.1 1907.5 546.7 1908.7 551.8 C1909.9 556.9 1910.3 559.6 1911.1 566.5 C1911.9 573.4 1913.3 584.2 1913.4 593.1 C1913.5 602.0 1913.0 610.8 1911.9 619.6 C1910.8 628.5 1908.9 638.2 1906.6 646.2 C1904.2 654.2 1900.2 662.5 1897.8 667.4 C1895.4 672.2 1894.3 672.9 1892.2 675.3 C1890.1 677.7 1888.5 679.5 1885.4 681.6 C1882.3 683.7 1877.5 686.8 1873.8 688.1 C1870.1 689.4 1866.9 689.6 1863.5 689.2 C1860.1 688.8 1856.2 687.2 1853.3 685.6 C1850.4 684.0 1848.1 681.8 1846.1 679.4 C1844.0 677.0 1842.7 674.6 1841.0 671.2 C1839.3 667.8 1837.6 662.8 1835.9 658.9 C1834.2 655.0 1832.4 651.1 1830.7 647.7 C1829.0 644.3 1826.8 640.5 1825.5 638.5 C1824.2 636.5 1824.3 636.6 1822.7 635.4 C1821.1 634.1 1817.1 631.7 1816.0 631.0 Z"/>
<g clip-path="url(#hcp)"><path d="M1816.0 562.0 C1817.7 559.2 1823.2 550.5 1826.0 545.0 C1828.8 539.5 1830.6 533.9 1832.5 529.3 C1834.4 524.7 1835.5 521.8 1837.4 517.6 C1839.4 513.4 1841.9 507.3 1844.2 503.9 C1846.5 500.5 1848.6 498.7 1851.1 497.0 C1853.5 495.3 1856.3 494.3 1858.9 493.6 C1861.5 492.9 1864.1 492.5 1866.7 492.6 C1869.3 492.7 1871.9 493.0 1874.5 494.1 C1877.1 495.2 1879.7 496.7 1882.3 499.0 C1884.9 501.3 1887.6 504.1 1890.2 507.8 C1892.8 511.6 1895.7 516.8 1898.0 521.5 C1900.3 526.2 1902.1 531.1 1903.9 536.1 C1905.7 541.1 1907.5 546.7 1908.7 551.8 C1909.9 556.9 1910.3 559.6 1911.1 566.5 C1911.9 573.4 1913.3 584.2 1913.4 593.1 C1913.5 602.0 1913.0 610.8 1911.9 619.6 C1910.8 628.5 1908.9 638.2 1906.6 646.2 C1904.2 654.2 1900.2 662.5 1897.8 667.4 C1895.4 672.2 1894.3 672.9 1892.2 675.3 C1890.1 677.7 1888.5 679.5 1885.4 681.6 C1882.3 683.7 1877.5 686.8 1873.8 688.1 C1870.1 689.4 1866.9 689.6 1863.5 689.2 C1860.1 688.8 1856.2 687.2 1853.3 685.6 C1850.4 684.0 1848.1 681.8 1846.1 679.4 C1844.0 677.0 1842.7 674.6 1841.0 671.2 C1839.3 667.8 1837.6 662.8 1835.9 658.9 C1834.2 655.0 1832.4 651.1 1830.7 647.7 C1829.0 644.3 1826.8 640.5 1825.5 638.5 C1824.2 636.5 1824.3 636.6 1822.7 635.4 C1821.1 634.1 1817.1 631.7 1816.0 631.0" fill="none" stroke="#a3468a" stroke-opacity=".55" stroke-width="7" filter="url(#bl2)"/><path d="M1834.4 473.1 C1836.0 472.8 1840.9 471.6 1844.2 471.1 C1847.5 470.6 1850.7 470.3 1854.0 470.2 C1857.3 470.1 1860.5 470.2 1863.8 470.6 C1867.0 471.0 1870.2 471.5 1873.5 472.6 C1876.8 473.7 1880.0 475.2 1883.3 477.0 C1886.6 478.8 1889.8 480.7 1893.1 483.4 C1896.4 486.1 1899.6 489.0 1902.9 493.1 C1906.2 497.2 1909.9 502.8 1912.7 507.8 C1915.5 512.9 1917.4 517.9 1919.5 523.4 C1921.6 528.9 1923.6 534.9 1925.4 541.0 C1927.2 547.1 1929.1 554.0 1930.2 560.0 C1931.3 566.0 1931.8 571.5 1932.3 577.0 C1932.8 582.5 1933.3 586.0 1933.2 593.1 C1933.1 600.2 1932.6 610.8 1931.4 619.6 C1930.2 628.5 1928.4 637.4 1926.1 646.2 C1923.8 655.1 1921.1 664.4 1917.3 672.7 C1913.5 681.0 1907.3 690.3 1903.1 695.8 C1898.9 701.3 1895.7 703.2 1892.2 705.6 C1888.7 708.0 1885.4 709.0 1882.0 710.2 C1878.6 711.4 1875.1 712.2 1871.7 712.7 C1868.3 713.2 1864.9 713.4 1861.5 713.4 C1858.1 713.4 1854.6 713.2 1851.2 712.7 C1847.8 712.2 1842.7 711.0 1841.0 710.7" fill="none" stroke="#f6b0e2" stroke-opacity=".75" stroke-width="7" filter="url(#bl2)" transform="translate(-5 3)"/></g>
<ellipse cx="1680" cy="430" rx="144.300" ry="9.800" fill="#b9b4b8"/>
<ellipse cx="1680" cy="430.800" rx="142.500" ry="9" fill="url(#mi)"/>
<clipPath id="bcp"><path d="M1823.800 431 A142.150 7 0 0 1 1539.500 431.300 Q1535.900 432.800 1535.800 438.500 L1535.8 736.0 C1536.1 737.5 1536.6 742.2 1537.6 745.0 C1538.6 747.8 1539.0 750.4 1541.6 753.0 C1544.2 755.6 1545.7 757.8 1553.2 760.4 C1560.7 763.0 1572.6 766.2 1586.4 768.7 C1600.2 771.2 1619.6 774.0 1636.2 775.6 C1652.8 777.2 1669.4 778.2 1686.0 778.3 C1702.6 778.4 1719.2 777.8 1735.8 776.2 C1752.4 774.6 1773.1 771.5 1785.6 768.7 C1798.0 765.9 1804.7 763.3 1810.5 759.6 C1816.3 755.9 1818.3 750.2 1820.5 746.3 C1822.7 742.4 1823.2 737.7 1823.8 736.0 Z"/></clipPath>
<path d="M1823.800 431 A142.150 7 0 0 1 1539.500 431.300 Q1535.900 432.800 1535.800 438.500 L1535.8 736.0 C1536.1 737.5 1536.6 742.2 1537.6 745.0 C1538.6 747.8 1539.0 750.4 1541.6 753.0 C1544.2 755.6 1545.7 757.8 1553.2 760.4 C1560.7 763.0 1572.6 766.2 1586.4 768.7 C1600.2 771.2 1619.6 774.0 1636.2 775.6 C1652.8 777.2 1669.4 778.2 1686.0 778.3 C1702.6 778.4 1719.2 777.8 1735.8 776.2 C1752.4 774.6 1773.1 771.5 1785.6 768.7 C1798.0 765.9 1804.7 763.3 1810.5 759.6 C1816.3 755.9 1818.3 750.2 1820.5 746.3 C1822.7 742.4 1823.2 737.7 1823.8 736.0 Z" fill="url(#mb)"/>
<path d="M1823.800 431 A142.150 7 0 0 1 1539.500 431.300 Q1535.900 432.800 1535.800 438.500 L1535.8 736.0 C1536.1 737.5 1536.6 742.2 1537.6 745.0 C1538.6 747.8 1539.0 750.4 1541.6 753.0 C1544.2 755.6 1545.7 757.8 1553.2 760.4 C1560.7 763.0 1572.6 766.2 1586.4 768.7 C1600.2 771.2 1619.6 774.0 1636.2 775.6 C1652.8 777.2 1669.4 778.2 1686.0 778.3 C1702.6 778.4 1719.2 777.8 1735.8 776.2 C1752.4 774.6 1773.1 771.5 1785.6 768.7 C1798.0 765.9 1804.7 763.3 1810.5 759.6 C1816.3 755.9 1818.3 750.2 1820.5 746.3 C1822.7 742.4 1823.2 737.7 1823.8 736.0 Z" fill="url(#mbv)"/>
<g mask="url(#lm)"><path d="M1823.800 431 A142.150 7 0 0 1 1539.500 431.300 Q1535.900 432.800 1535.800 438.500 L1535.8 736.0 C1536.1 737.5 1536.6 742.2 1537.6 745.0 C1538.6 747.8 1539.0 750.4 1541.6 753.0 C1544.2 755.6 1545.7 757.8 1553.2 760.4 C1560.7 763.0 1572.6 766.2 1586.4 768.7 C1600.2 771.2 1619.6 774.0 1636.2 775.6 C1652.8 777.2 1669.4 778.2 1686.0 778.3 C1702.6 778.4 1719.2 777.8 1735.8 776.2 C1752.4 774.6 1773.1 771.5 1785.6 768.7 C1798.0 765.9 1804.7 763.3 1810.5 759.6 C1816.3 755.9 1818.3 750.2 1820.5 746.3 C1822.7 742.4 1823.2 737.7 1823.8 736.0 Z" fill="url(#lv)"/></g>
<g clip-path="url(#bcp)"><path d="M1794 503 L1812 498 L1816 515 L1826 590 L1824 606 L1808 612 L1799 598 L1792 516 Z" fill="#7d2466" fill-opacity=".85" filter="url(#bl3)"/></g>
<path d="M1803.400 497.600 L1824.400 495.900 L1830.300 511.900 L1840.300 587.300 L1838.600 609.100 L1816.800 615.800 L1808.400 597.400 L1801.400 513.500 Z" fill="url(#tg)"/>
<path d="M1806 431.500 C1808 445 1812 462 1815 476 C1817 487 1814 492 1811 489 C1808 485 1810 478 1813 477 M1809.500 478 C1806 484 1808 494 1813 503" stroke="#f3f1f2" stroke-width="1.400" fill="none"/>
<path d="M1811 497 L1814.500 496.500 L1815 507 L1813 507 Z" fill="#f8f6ee"/>
<rect x="1574.500" y="561.600" width="186.200" height="2" fill="#fff" fill-opacity=".95"/>
</svg>
<div class="t" style="left:1574.50px;top:503.34px;font:700 47.00px/1 'Liberation Serif',serif;color:#fff;letter-spacing:-1.050px;">Emma</div>
<div class="t" style="left:1577.00px;top:564.13px;font:italic 400 36.50px/1 'Liberation Serif',serif;color:rgba(255,255,255,.93);letter-spacing:1.950px;">noun</div>
<div class="t" style="left:1573.50px;top:610.85px;font:700 20.00px/1 'Liberation Serif',serif;color:#fff;letter-spacing:0.023px;">1. Loves a cheeky gin</div>
<div class="t" style="left:1574.50px;top:632.45px;font:700 20.00px/1 'Liberation Serif',serif;color:#fff;letter-spacing:0.293px;">2. Aweful cook</div>
<div class="t" style="left:1574.50px;top:653.65px;font:700 20.00px/1 'Liberation Serif',serif;color:#fff;letter-spacing:0.079px;">3. Obsessed with cats</div>
<div class="a" style="left:1363.500px;top:902px;width:650px;height:56.500px;border-radius:11px;background:#f7f7f7"></div>
<div class="a" style="left:1369px;top:907.500px;width:34px;height:34px;border-radius:7px;background:#fff"></div>
<svg style="left:1374px;top:912px" width="24" height="24" viewBox="0 0 24 24"><path d="M8.700 17.500 C6.200 15.500 5.700 13.600 5.700 12.200 A6.100 6.100 0 1 1 17.900 12.200 C17.900 13.600 17.400 15.500 14.900 17.500 Z" stroke="#333" stroke-width="2" fill="none"/><path d="M8.900 17.600 V19.300 Q8.900 22 11.800 22 Q14.700 22 14.700 19.300 V17.600" stroke="#333" stroke-width="2" fill="none"/><path d="M11.800 2.100 V2.700 M4.900 5 L5.300 5.400 M18.700 5 L18.300 5.400 M1.700 12.100 H2.300 M21.300 12.100 H21.900" stroke="#333" stroke-width="2.100" stroke-linecap="round"/></svg>
<div class="t" style="left:1414.80px;top:909.32px;font:italic 400 19.00px/1 'Liberation Sans',sans-serif;color:#444;letter-spacing:0.256px;-webkit-text-stroke:0.22px #444;">Drag to move the image/ text on the background.Click it to</div>
<div class="t" style="left:1414.80px;top:932.32px;font:italic 400 19.00px/1 'Liberation Sans',sans-serif;color:#444;letter-spacing:0.238px;-webkit-text-stroke:0.22px #444;">reveal options to rotate or resize.</div>
<svg style="left:1988px;top:916px" width="12" height="12" viewBox="0 0 12 12"><path d="M0.800 0.800 L11.200 11.200 M11.200 0.800 L0.800 11.200" stroke="#2a2a2a" stroke-width="1.800" fill="none"/></svg>
<div class="a" style="left:1917px;top:960px;width:85.800px;height:85.800px;border-radius:50%;background:#5870ee;box-shadow:0 2px 8px rgba(0,0,0,.12)"></div>
<svg style="left:1917px;top:960.500px" width="86" height="85" viewBox="0 0 86 85"><path d="M21.900 31 L60.700 26.600 L62.700 50.900 L49.400 52.500 L44.200 60.600 L37.700 53.800 L24 55.400 Z" fill="#fff"/></svg>
</div>
</body>
</html>
